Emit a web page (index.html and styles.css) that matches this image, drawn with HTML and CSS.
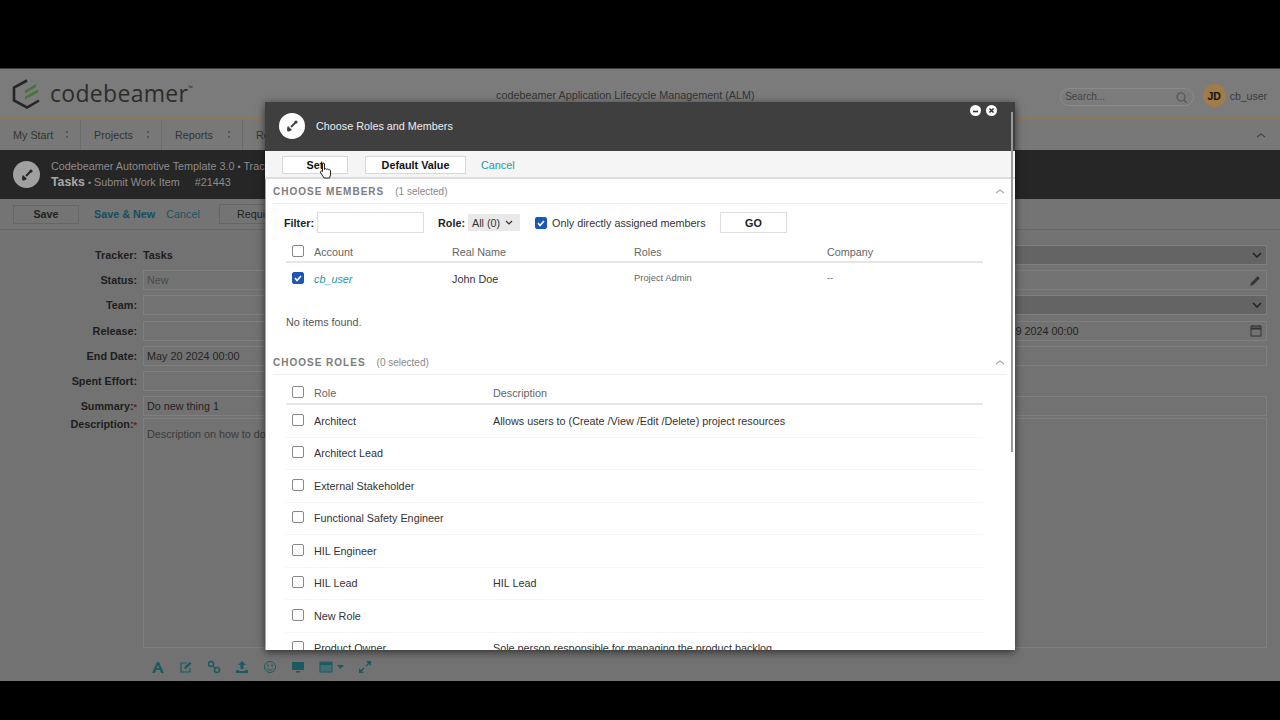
FILE: index.html
```html
<!DOCTYPE html>
<html lang="en">
<head>
  <meta charset="UTF-8">
  <title>codebeamer</title>
  <link rel="stylesheet" href="styles.css">
</head>
<body>
  <div class="page">
    <header class="top">
      <svg class="logo" width="30" height="32" viewBox="0 0 30 32">
        <path d="M16 2.500 3 9.500v13l13 7 12-7" fill="none" stroke="#262626" stroke-width="2.600"/>
        <path d="M14 12.500 25 6v3l-11 6.500zM14 18.500 27 11.500v3l-13 7z" fill="#47763a"/>
      </svg>
      <div class="brand">codebeamer<sup>™</sup></div>
      <div class="app-title">codebeamer Application Lifecycle Management (ALM)</div>
      <div class="search">
        <span>Search...</span>
        <svg width="14" height="14" viewBox="0 0 14 14"><circle cx="6" cy="7" r="4" fill="none" stroke="#555" stroke-width="1.200"/><path d="m9 10 3 3" stroke="#555" stroke-width="1.200"/></svg>
      </div>
      <div class="avatar">JD</div>
      <div class="username">cb_user</div>
    </header>

    <nav class="nav">
      <div class="nav-item">My Start<i></i></div>
      <div class="nav-item">Projects<i></i></div>
      <div class="nav-item">Reports<i></i></div>
      <div class="nav-item">Re</div>
      <svg class="nav-collapse" width="12" height="8" viewBox="0 0 12 8"><path d="m2 6 4-3 4 3" fill="none" stroke="#444" stroke-width="1.300"/></svg>
    </nav>

    <div class="band">
      <div class="band-icon">
        <svg width="16" height="16" viewBox="0 0 16 16"><path d="m7 9 5-5" stroke="#262626" stroke-width="1.800"/><path d="M3.500 13.500c-.8-2-.5-4 .5-5.500l4 4c-1.500 1-3 1.700-4.500 1.500z" fill="#262626"/><circle cx="12" cy="4" r="1.600" fill="#262626"/></svg>
      </div>
      <div>
        <div class="crumbs">Codebeamer Automotive Template 3.0 <b>•</b> Trackers</div>
        <div class="crumbs-main"><strong>Tasks</strong> <b>•</b> Submit Work Item <span>#21443</span></div>
      </div>
    </div>

    <div class="actions">
      <button class="btn save-btn">Save</button>
      <a class="link-bold">Save &amp; New</a>
      <a class="link-plain">Cancel</a>
      <button class="btn req-btn">Required</button>
    </div>

    <main class="form">
      <div class="row row-tracker">
        <label>Tracker:</label><span class="value">Tasks</span>
        <div class="field right dark"><svg class="chev" width="10" height="6" viewBox="0 0 10 6"><path d="m1 1 4 4 4-4" fill="none" stroke="#222" stroke-width="1.500"/></svg></div>
      </div>
      <div class="row">
        <label>Status:</label><div class="field left muted">New</div>
        <div class="field right"><svg class="chev" width="13" height="13" viewBox="0 0 12 12"><path d="M1 11l1-3 6-6 2 2-6 6z" fill="#333"/></svg></div>
      </div>
      <div class="row">
        <label>Team:</label><div class="field left"></div>
        <div class="field right dark"><svg class="chev" width="10" height="6" viewBox="0 0 10 6"><path d="m1 1 4 4 4-4" fill="none" stroke="#222" stroke-width="1.500"/></svg></div>
      </div>
      <div class="row">
        <label>Release:</label><div class="field left"></div>
        <div class="field right date">May 29 2024 00:00<svg class="chev" width="12" height="13" viewBox="0 0 12 13"><rect x="1" y="2" width="10" height="10" fill="none" stroke="#333"/><path d="M1 4.500h10" stroke="#333" stroke-width="2"/><path d="M3 1v2M9 1v2" stroke="#333"/></svg></div>
      </div>
      <div class="row">
        <label>End Date:</label><div class="field left">May 20 2024 00:00</div>
        <div class="field right"></div>
      </div>
      <div class="row">
        <label>Spent Effort:</label><div class="field left"></div>
      </div>
      <div class="row">
        <label>Summary:<em>*</em></label><div class="field wide">Do new thing 1</div>
      </div>
      <div class="row row-desc">
        <label>Description:<em>*</em></label><div class="field wide textarea">Description on how to do the work</div>
      </div>
    </main>

    <div class="editor-tools">
      <svg width="14" height="14" viewBox="0 0 14 14"><path d="M1 13 6 2h2l5 11h-3L9 10H5l-1 3zM5.800 8h2.400L7 5z" fill="#1d5a60"/></svg>
      <svg width="14" height="14" viewBox="0 0 14 14"><path d="M11 8v4H2V3h6" fill="none" stroke="#1d5a60" stroke-width="1.200"/><path d="m5 9 1-3 5-4 1.500 1.500-5 5z" fill="#1d5a60"/></svg>
      <svg width="14" height="14" viewBox="0 0 14 14"><circle cx="4" cy="4" r="2.500" fill="none" stroke="#1d5a60" stroke-width="1.500"/><circle cx="10" cy="10" r="2.500" fill="none" stroke="#1d5a60" stroke-width="1.500"/><path d="m5.500 5.500 3 3" stroke="#1d5a60" stroke-width="1.500"/></svg>
      <svg width="14" height="14" viewBox="0 0 14 14"><path d="M7 1 3 5h2.500v4h3V5H11zM1 10h3v1h6v-1h3v3H1z" fill="#1d5a60"/></svg>
      <svg width="14" height="14" viewBox="0 0 14 14"><circle cx="7" cy="7" r="5.500" fill="none" stroke="#1d5a60"/><circle cx="5" cy="5.500" r=".9" fill="#1d5a60"/><circle cx="9" cy="5.500" r=".9" fill="#1d5a60"/><path d="M4 8.500c1.500 2 4.500 2 6 0" fill="none" stroke="#1d5a60"/></svg>
      <svg width="14" height="14" viewBox="0 0 14 14"><path d="M1 2h12v8H1zM5 11h4v1.500H5z" fill="#1d5a60"/></svg>
      <div class="tool-drop">
        <svg width="14" height="14" viewBox="0 0 14 14"><rect x="1" y="2" width="12" height="10" fill="#3f6f73" stroke="#1d5a60"/><path d="M1 4h12" stroke="#1d5a60" stroke-width="2"/></svg>
        <svg width="7" height="4" viewBox="0 0 7 4"><path d="M0 0h7L3.500 4z" fill="#1d5a60"/></svg>
      </div>
      <svg width="14" height="14" viewBox="0 0 14 14"><path d="M8 1h5v5l-2-2-2.500 2.500-1-1L10 3zM6 13H1V8l2 2 2.500-2.500 1 1L4 11z" fill="#1d5a60"/></svg>
    </div>
  </div>

  <section class="dialog">
    <div class="dialog-title">
      <div class="dialog-icon">
        <svg width="16" height="16" viewBox="0 0 16 16"><path d="m7 9 5-5" stroke="#3f3f3f" stroke-width="1.800"/><path d="M3.500 13.500c-.8-2-.5-4 .5-5.500l4 4c-1.500 1-3 1.700-4.500 1.500z" fill="#3f3f3f"/><circle cx="12" cy="4" r="1.600" fill="#3f3f3f"/></svg>
      </div>
      <span>Choose Roles and Members</span>
      <div class="window-btns">
        <svg width="11" height="11" viewBox="0 0 11 11"><circle cx="5.500" cy="5.500" r="5.500" fill="#fff"/><path d="M3 6.500h5" stroke="#333" stroke-width="1.600"/></svg>
        <svg width="11" height="11" viewBox="0 0 11 11"><circle cx="5.500" cy="5.500" r="5.500" fill="#fff"/><path d="m3.500 3.500 4 4m0-4-4 4" stroke="#333" stroke-width="1.600"/></svg>
      </div>
    </div>

    <div class="dialog-actions">
      <button class="btn set-btn">Set</button>
      <button class="btn default-btn">Default Value</button>
      <a class="teal">Cancel</a>
    </div>

    <div class="section-head">
      <h4>CHOOSE MEMBERS</h4><span>(1 selected)</span>
      <svg width="12" height="8" viewBox="0 0 12 8"><path d="m2 6 4-3 4 3" fill="none" stroke="#aaa" stroke-width="1.300"/></svg>
    </div>

    <div class="filters">
      <b>Filter:</b>
      <div class="filter-input"></div>
      <b class="role-label">Role:</b>
      <div class="role-select">All (0)<svg width="8" height="5" viewBox="0 0 8 5"><path d="m1 1 3 3 3-3" fill="none" stroke="#333" stroke-width="1.200"/></svg></div>
      <div class="check on small-gap"><svg width="12" height="12" viewBox="0 0 12 12"><path d="m3 6 2 2.500L9 4" fill="none" stroke="#fff" stroke-width="1.600"/></svg></div>
      <span class="only-label">Only directly assigned members</span>
      <button class="btn go-btn">GO</button>
    </div>

    <div class="tbl members">
      <div class="tr th"><div class="check"></div><span class="c1">Account</span><span class="c2">Real Name</span><span class="c3">Roles</span><span>Company</span></div>
      <div class="tr"><div class="check on"><svg width="12" height="12" viewBox="0 0 12 12"><path d="m3 6 2 2.500L9 4" fill="none" stroke="#fff" stroke-width="1.600"/></svg></div><a class="c1 user-link">cb_user</a><span class="c2">John Doe</span><span class="c3 tiny">Project Admin</span><span class="tiny">--</span></div>
    </div>

    <p class="empty">No items found.</p>

    <div class="section-head roles-head">
      <h4>CHOOSE ROLES</h4><span>(0 selected)</span>
      <svg width="12" height="8" viewBox="0 0 12 8"><path d="m2 6 4-3 4 3" fill="none" stroke="#aaa" stroke-width="1.300"/></svg>
    </div>

    <div class="tbl roles">
      <div class="tr th"><div class="check"></div><span class="r1">Role</span><span>Description</span></div>
      <div class="tr"><div class="check"></div><span class="r1">Architect</span><span>Allows users to (Create /View /Edit /Delete) project resources</span></div>
      <div class="tr"><div class="check"></div><span class="r1">Architect Lead</span></div>
      <div class="tr"><div class="check"></div><span class="r1">External Stakeholder</span></div>
      <div class="tr"><div class="check"></div><span class="r1">Functional Safety Engineer</span></div>
      <div class="tr"><div class="check"></div><span class="r1">HIL Engineer</span></div>
      <div class="tr"><div class="check"></div><span class="r1">HIL Lead</span><span>HIL Lead</span></div>
      <div class="tr"><div class="check"></div><span class="r1">New Role</span></div>
      <div class="tr"><div class="check"></div><span class="r1">Product Owner</span><span>Sole person responsible for managing the product backlog</span></div>
    </div>

    <div class="scrollbar"></div>

    <svg class="cursor" width="14" height="18" viewBox="0 0 14 18">
      <path d="M3.500 2c0-1.300 2-1.300 2 0v5.500c.5-1 2-1 2.200 0 .4-.8 1.800-.7 2 .3.500-.5 1.800-.3 1.800.8V12c0 1.500-.5 2.500-1 4H5L1.500 10.500c-.7-1.200.8-2.200 2-1z" fill="#fff" stroke="#222" stroke-width="1"/>
    </svg>
  </section>
</body>
</html>
```

FILE: styles.css
```css
* {
  box-sizing: border-box;
}
html, body {
  margin: 0;
  height: 720px;
  overflow: hidden;
}
body {
  background: #000;
  padding: 68px 0 39px;
  font-family: "Liberation Sans", Arial, sans-serif;
  font-size: 10.8px;
  color: #222;
}
.page {
  height: 613px;
  background: #727272;
  display: flex;
  flex-direction: column;
  border-top: 1px solid #3c3c3c;
}

/* top bar */
.top {
  height: 51px;
  flex: none;
  display: flex;
  align-items: center;
  background: #7b7b7b;
  border-bottom: 2px solid #8e7754;
  padding: 0 13px 0 11px;
  position: relative;
}
.logo {
  flex: none;
}
.brand {
  font-family: "Open Sans", sans-serif;
  font-size: 23px;
  color: #2c2c2c;
  margin-left: 9px;
  margin-top: -2px;
  width: 137px;
  white-space: nowrap;
  letter-spacing: .3px;
}
.brand sup {
  font-size: 6px;
  vertical-align: 12px;
}
.app-title {
  margin-left: 309px;
  margin-top: 3px;
  color: #333;
  white-space: nowrap;
  width: 566px;
}
.search {
  width: 134px;
  height: 18px;
  margin-top: 6px;
  border: 1px solid #8b8b8b;
  border-radius: 9px;
  display: flex;
  align-items: center;
  justify-content: space-between;
  padding: 0 4px;
  font-size: 10px;
  color: #444;
}
.avatar {
  width: 23px;
  height: 23px;
  margin-top: 4px;
  border-radius: 50%;
  background: #9f7c48;
  color: #111;
  font-weight: bold;
  font-size: 10.5px;
  display: flex;
  align-items: center;
  justify-content: center;
  margin-left: 9px;
}
.username {
  margin-left: 4px;
  margin-top: 4px;
  font-size: 10.5px;
  color: #3a3a3a;
}

/* nav */
.nav {
  height: 30px;
  flex: none;
  display: flex;
  align-items: center;
  background: #787878;
  color: #333;
}
.nav-item {
  height: 100%;
  width: 81px;
  padding-left: 13px;
  display: flex;
  align-items: center;
  border-right: 1px solid #6c6c6c;
  position: relative;
}
.nav-item:last-of-type {
  border: none;
}
.nav-item i {
  position: absolute;
  right: 12px;
  top: 11px;
  height: 7px;
  border-left: 2px dotted #555;
}
.nav-collapse {
  margin-left: auto;
  margin-right: 13px;
}

/* dark band */
.band {
  height: 49px;
  flex: none;
  background: #262626;
  display: flex;
  align-items: center;
  padding-left: 13px;
  gap: 11px;
  color: #8c8c8c;
}
.band-icon {
  width: 27px;
  height: 27px;
  border-radius: 50%;
  background: #a0a0a0;
  display: flex;
  align-items: center;
  justify-content: center;
}
.crumbs b, .crumbs-main b {
  font-size: 9px;
  font-weight: normal;
}
.crumbs-main {
  margin-top: 3px;
}
.crumbs-main strong {
  font-size: 12.3px;
  color: #a8a8a8;
}
.crumbs-main span {
  margin-left: 12px;
}

/* action row */
.actions {
  height: 31px;
  flex: none;
  display: flex;
  align-items: center;
  padding-left: 13px;
  background: #747474;
  border-bottom: 1px solid #666;
}
.btn {
  font-family: inherit;
  font-size: 10.8px;
  font-weight: bold;
  background: transparent;
  border: 1px solid #666;
  color: #222;
  padding: 0;
  height: 19px;
}
.save-btn {
  width: 66px;
}
.link-bold {
  font-weight: bold;
  color: #12505f;
  margin-left: 15px;
}
.link-plain {
  color: #1c5560;
  margin-left: 11px;
}
.req-btn {
  width: 80px;
  margin-left: 19px;
  height: 20px;
  font-weight: normal;
}

/* form */
.form {
  flex: 1;
  min-height: 0;
  padding-top: 15px;
  display: flex;
  flex-direction: column;
  gap: 5.2px;
  background: #727272;
}
.row {
  display: flex;
  align-items: center;
  height: 20px;
  padding-right: 13px;
}
.row label {
  width: 137px;
  text-align: right;
  font-weight: bold;
  color: #1d1d1d;
  flex: none;
  margin-right: 6px;
}
.row label em {
  color: #7a1a1a;
  font-style: normal;
  font-size: 9px;
}
.value {
  font-weight: bold;
  color: #1d1d1d;
  flex: 1;
}
.field {
  height: 20px;
  border: 1px solid #7f7f7f;
  padding: 0 3px;
  display: flex;
  align-items: center;
  color: #222;
  white-space: nowrap;
}
.field.left {
  width: 480px;
}
.field.right {
  margin-left: 32px;
  flex: 1;
  justify-content: space-between;
  position: relative;
  padding-left: 330px;
  padding-right: 4px;
}
.field.right.dark {
  background: #646464;
}
.field.right .chev {
  margin-left: auto;
}
.field.wide {
  flex: 1;
}
.muted {
  color: #4a4a4a;
}
.row-tracker .field.right {
  margin-left: 0;
  flex: none;
  width: 640px;
}
.row-desc {
  flex: 1;
  align-items: flex-start;
  height: auto;
  margin-top: -3px;
}
.textarea {
  height: 100%;
  align-items: flex-start;
  padding-top: 9px;
  color: #3a3a3a;
}
.editor-tools {
  height: 33px;
  flex: none;
  margin-left: 143px;
  display: flex;
  align-items: center;
  padding: 4px 0 0 8px;
  gap: 14px;
  background: #727272;
}
.tool-drop {
  display: flex;
  align-items: center;
  gap: 4px;
}

/* dialog */
.dialog {
  position: absolute;
  left: 265px;
  top: 102px;
  width: 750px;
  height: 548px;
  overflow: hidden;
  background: #fff;
  box-shadow: inset 1px 0 #a8a8a8, 0 2px 8px rgba(0, 0, 0, .6);
  color: #333;
}
.dialog-title {
  height: 49px;
  background: #3f3f3f;
  color: #eee;
  display: flex;
  align-items: center;
  padding: 0 0 2px 14px;
  gap: 11px;
  position: relative;
}
.dialog-icon {
  width: 26px;
  height: 26px;
  border-radius: 50%;
  background: #fff;
  display: flex;
  align-items: center;
  justify-content: center;
}
.window-btns {
  position: absolute;
  top: 3px;
  right: 18px;
  display: flex;
  gap: 5px;
}
.dialog-actions {
  height: 28px;
  background: #f5f5f5;
  border-bottom: 2px solid #ddd;
  display: flex;
  align-items: center;
  padding: 2px 0 0 17px;
}
.dialog-actions .btn {
  height: 18px;
  background: #fff;
  border: 1px solid #d8d8d8;
  color: #111;
}
.set-btn {
  width: 66px;
}
.default-btn {
  width: 101px;
  margin-left: 17px;
}
.teal {
  color: #1a9aa5;
  margin-left: 15px;
}
.section-head {
  height: 25px;
  margin-left: 8px;
  margin-right: 8px;
  display: flex;
  align-items: center;
  border-bottom: 1px solid #eee;
  font-size: 10px;
  color: #888;
  position: relative;
}
.section-head h4 {
  margin: 0 11px 0 0;
  font-size: 10px;
  letter-spacing: 1px;
  color: #7d7d7d;
}
.section-head svg {
  position: absolute;
  right: 1px;
  top: 8px;
}
.filters {
  display: flex;
  align-items: center;
  height: 21px;
  margin-top: 8px;
  padding-left: 19px;
}
.filters b {
  color: #222;
}
.filter-input {
  width: 107px;
  height: 21px;
  border: 1px solid #ddd;
  margin-left: 3px;
}
.role-label {
  margin-left: 14px;
}
.role-select {
  width: 52px;
  height: 17px;
  margin-left: 3px;
  background: #e9e9e9;
  padding-left: 4px;
  display: flex;
  align-items: center;
  gap: 5px;
  flex: none;
}
.small-gap {
  margin-left: 15px;
}
.only-label {
  margin-left: 5px;
  width: 168px;
  flex: none;
  white-space: nowrap;
}
.go-btn {
  width: 67px;
  height: 21px;
  background: #fff;
  border: 1px solid #ddd;
  color: #222;
}
.check {
  width: 12px;
  height: 12px;
  border: 1px solid #888;
  border-radius: 2px;
  flex: none;
  background: #fff;
  display: block;
}
.check.on {
  background: #1d56b4;
  border-color: #1d56b4;
}
.check.on svg {
  display: block;
  margin: -1px;
}
.tbl {
  margin-left: 21px;
  width: 697px;
}
.tr {
  display: flex;
  align-items: center;
  border-bottom: 1px solid #f6f6f6;
  height: 32.5px;
  padding-left: 6px;
}
.tr .check {
  margin-right: 10px;
  margin-top: -2px;
}
.tr.th {
  color: #666;
  height: 22px;
  padding-top: 1px;
  border-bottom: 2px solid #e6e6e6;
}
.members {
  margin-top: 8px;
}
.members .tr:last-child {
  border: none;
}
.c1 {
  width: 138px;
  flex: none;
}
.c2 {
  width: 182px;
  flex: none;
}
.c3 {
  width: 193px;
  flex: none;
}
.tiny {
  font-size: 9.4px;
  color: #666;
  margin-top: -3px;
}
.user-link {
  font-style: italic;
  color: #1a9aa5;
}
.empty {
  margin: 20.5px 0 0 21px;
  height: 14px;
  color: #555;
}
.roles-head {
  margin-top: 20px;
}
.roles .r1 {
  width: 179px;
  flex: none;
}
.roles .tr.th {
  height: 30px;
  padding-top: 8px;
}
.scrollbar {
  position: absolute;
  top: 10px;
  right: 2px;
  width: 2px;
  height: 340px;
  background: #9a9a9a;
}
.cursor {
  position: absolute;
  left: 54px;
  top: 60px;
}
```
